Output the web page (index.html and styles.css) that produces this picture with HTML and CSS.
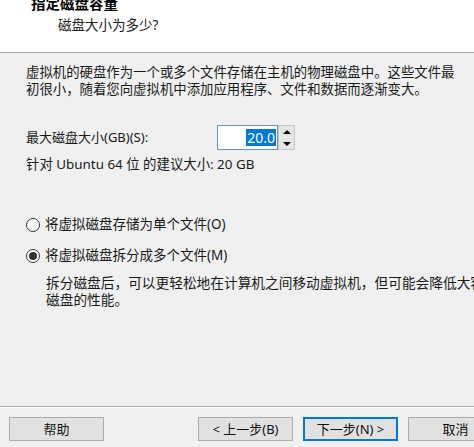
FILE: index.html
```html
<!DOCTYPE html>
<html lang="zh">
<head>
<meta charset="utf-8">
<link rel="stylesheet" href="styles.css">
</head>
<body>
<div class="page">
  <div class="header">
    <div class="title">指定磁盘容量</div>
    <div class="subtitle">磁盘大小为多少?</div>
  </div>
  <div class="main">
    <p class="intro">虚拟机的硬盘作为一个或多个文件存储在主机的物理磁盘中。这些文件最<br>初很小，随着您向虚拟机中添加应用程序、文件和数据而逐渐变大。</p>
    <div class="size-row">
      <span class="size-label">最大磁盘大小(GB)(S):</span>
      <div class="spin">
        <div class="spin-field"><span class="sel">20.0</span></div>
        <div class="spin-btns">
          <div class="spin-btn"><span class="tri-up"></span></div>
          <div class="spin-btn"><span class="tri-down"></span></div>
        </div>
      </div>
    </div>
    <div class="recommend">针对 Ubuntu 64 位 的建议大小: 20 GB</div>
    <div class="radio-row first"><span class="radio"></span><span>将虚拟磁盘存储为单个文件(O)</span></div>
    <div class="radio-row second"><span class="radio checked"></span><span>将虚拟磁盘拆分成多个文件(M)</span></div>
    <p class="desc">拆分磁盘后，可以更轻松地在计算机之间移动虚拟机，但可能会降低大容量<br>磁盘的性能。</p>
  </div>
  <div class="footer">
    <button class="btn help">帮助</button>
    <div class="nav">
      <button class="btn">&lt; 上一步(B)</button>
      <button class="btn default">下一步(N) &gt;</button>
      <button class="btn">取消</button>
    </div>
  </div>
</div>
</body>
</html>
```

FILE: styles.css
```css
html, body {
  margin: 0;
  padding: 0;
}
body {
  width: 474px;
  height: 447px;
  overflow: hidden;
  background: #f0f0f0;
  font-family: "Noto Sans", "Noto Sans CJK SC", sans-serif;
  font-size: 13px;
  color: #1a1a1a;
}
.page {
  display: flex;
  flex-direction: column;
  height: 447px;
}
.header {
  background: #ffffff;
  height: 53px;
  border-bottom: 1px solid #a8a8a8;
  box-sizing: border-box;
  flex: none;
}
.title {
  font-size: 14.5px;
  font-weight: bold;
  line-height: 17px;
  margin-top: -5px;
  padding-left: 31px;
  color: #000;
}
.subtitle {
  font-size: 13.5px;
  line-height: 17px;
  margin-top: 5px;
  padding-left: 58px;
  color: #222;
}
.main {
  flex: 1;
  padding-left: 26px;
  overflow: hidden;
}
.intro {
  margin: 11px 0 0 0;
  line-height: 17px;
  font-size: 13.4px;
  white-space: nowrap;
}
.size-row {
  display: flex;
  align-items: center;
  margin-top: 27px;
  height: 25px;
}
.size-label {
  width: 191px;
  line-height: 17px;
}
.spin {
  display: flex;
  height: 25px;
}
.spin-field {
  width: 61px;
  height: 25px;
  box-sizing: border-box;
  border: 1px solid #6f8fbf;
  background: #fff;
  display: flex;
  align-items: center;
  justify-content: flex-end;
  padding-right: 1px;
  font-size: 14px;
}
.sel {
  background: #0078d7;
  color: #fff;
  line-height: 17px;
  padding: 0 1px;
}
.spin-btns {
  display: flex;
  flex-direction: column;
  width: 17px;
  height: 25px;
  box-sizing: border-box;
  border: 1px solid #c8c8c8;
  background: #e9e9e9;
  gap: 1px;
}
.spin-btn {
  flex: 1;
  display: flex;
  align-items: center;
  justify-content: center;
  background: #e6e6e6;
}
.tri-up {
  width: 0;
  height: 0;
  border-left: 4px solid transparent;
  border-right: 4px solid transparent;
  border-bottom: 4px solid #000;
}
.tri-down {
  width: 0;
  height: 0;
  border-left: 4px solid transparent;
  border-right: 4px solid transparent;
  border-top: 4px solid #000;
}
.recommend {
  margin-top: 6px;
  line-height: 17px;
  font-size: 13.4px;
}
.radio-row {
  display: flex;
  align-items: center;
  gap: 5px;
  line-height: 17px;
  font-size: 13.5px;
}
.radio-row.first {
  margin-top: 43px;
}
.radio-row.second {
  margin-top: 14px;
}
.radio {
  width: 14px;
  height: 14px;
  border: 1px solid #333;
  border-radius: 50%;
  background: #fff;
  box-sizing: border-box;
  display: flex;
  align-items: center;
  justify-content: center;
  flex: none;
}
.radio.checked::after {
  content: "";
  width: 8px;
  height: 8px;
  border-radius: 50%;
  background: #333;
}
.desc {
  margin: 10px 0 0 20px;
  line-height: 17px;
  font-size: 13.7px;
  white-space: nowrap;
}
.footer {
  flex: none;
  height: 41px;
  box-sizing: border-box;
  border-top: 1px solid #a8a8a8;
  box-shadow: inset 0 1px 0 #ffffff;
  padding: 10px 0 0 9px;
  display: flex;
  align-items: flex-start;
  overflow: hidden;
}
.btn {
  flex: none;
  font-family: inherit;
  font-size: 13px;
  width: 95px;
  height: 24px;
  padding: 0;
  line-height: 20px;
  background: #e1e1e1;
  border: 1px solid #adadad;
  color: #111;
}
.btn.default {
  border-color: #0078d7;
  box-shadow: inset 0 0 0 1px #0078d7;
}
.nav {
  flex: none;
  display: flex;
  gap: 10px;
  margin-left: 94px;
}
```
